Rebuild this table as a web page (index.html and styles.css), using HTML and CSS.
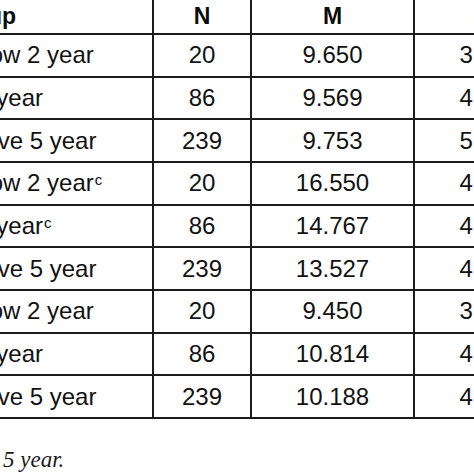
FILE: index.html
```html
<!DOCTYPE html>
<html>
<head>
<meta charset="utf-8">
<link rel="stylesheet" href="styles.css">
</head>
<body>
<div class="table">
  <div class="cell head first">Group</div>
  <div class="cell head">N</div>
  <div class="cell head">M</div>
  <div class="cell head">SD</div>

  <div class="cell first">Below 2 year</div><div class="cell">20</div><div class="cell">9.650</div><div class="cell last">3.543</div>
  <div class="cell first">2-5 year</div><div class="cell">86</div><div class="cell">9.569</div><div class="cell last">4.121</div>
  <div class="cell first">Above 5 year</div><div class="cell">239</div><div class="cell">9.753</div><div class="cell last">5.012</div>

  <div class="cell first">Below 2 year<sup>c</sup></div><div class="cell">20</div><div class="cell">16.550</div><div class="cell last">4.382</div>
  <div class="cell first">2-5 year<sup>c</sup></div><div class="cell">86</div><div class="cell">14.767</div><div class="cell last">4.610</div>
  <div class="cell first">Above 5 year</div><div class="cell">239</div><div class="cell">13.527</div><div class="cell last">4.873</div>

  <div class="cell first">Below 2 year</div><div class="cell">20</div><div class="cell">9.450</div><div class="cell last">3.804</div>
  <div class="cell first">2-5 year</div><div class="cell">86</div><div class="cell">10.814</div><div class="cell last">4.236</div>
  <div class="cell first">Above 5 year</div><div class="cell">239</div><div class="cell">10.188</div><div class="cell last">4.457</div>
</div>
<p class="note">5 year.</p>
</body>
</html>
```

FILE: styles.css
```css
html, body {
  margin: 0;
  padding: 0;
  background: #ffffff;
  overflow: hidden;
}

body {
  width: 474px;
  height: 474px;
  font-family: "Liberation Sans", Arial, sans-serif;
  color: #121212;
}

.table {
  display: grid;
  grid-template-columns: 212px 96px 161px 149px;
  grid-template-rows: 33px;
  grid-auto-rows: 40.67px;
  gap: 2px;
  width: 624px;
  margin-left: -60px;
  padding-bottom: 2px;
  background: #1b1b1b;
}

.cell {
  background: #ffffff;
  display: flex;
  align-items: center;
  justify-content: center;
  font-size: 24px;
  line-height: 1;
  white-space: nowrap;
}

.cell.first {
  justify-content: flex-start;
  padding-left: 15px;
}

.cell.head {
  font-weight: bold;
  font-size: 23px;
  color: #0c0c0c;
}

.cell.head.first {
  padding-left: 7px;
}

.cell sup {
  font-size: 15px;
  align-self: flex-start;
  margin-top: 9px;
  margin-left: 1px;
}

.note {
  margin: 28px 0 0 0;
  padding-left: 3px;
  font-family: "Liberation Serif", "Times New Roman", serif;
  font-style: italic;
  font-size: 23px;
  line-height: 26px;
  color: #1a1a1a;
}
```
